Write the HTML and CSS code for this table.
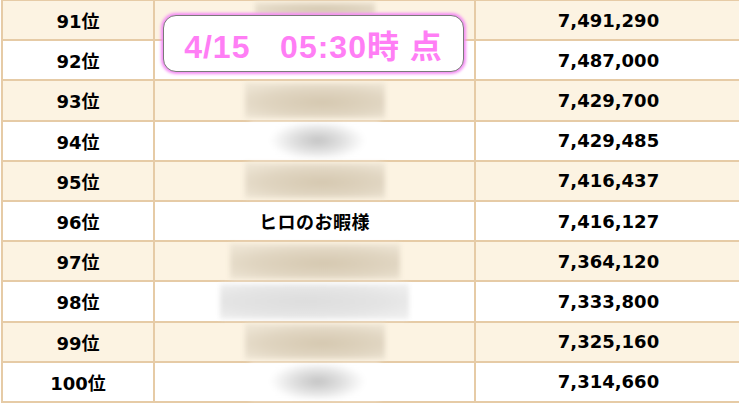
FILE: index.html
```html
<!DOCTYPE html>
<html lang="ja">
<head>
<meta charset="utf-8">
<title>ランキング</title>
<link rel="stylesheet" href="styles.css">
</head>
<body>
<div class="wrap">
  <table class="rank">
    <tbody>
      <tr class="odd"><td class="pos">91位</td><td class="name"><span class="blur beige w1 top"></span></td><td class="num">7,491,290</td></tr>
      <tr><td class="pos">92位</td><td class="name"></td><td class="num">7,487,000</td></tr>
      <tr class="odd"><td class="pos">93位</td><td class="name"><span class="blur beige w2"></span></td><td class="num">7,429,700</td></tr>
      <tr><td class="pos">94位</td><td class="name"><span class="blur spot w3"></span></td><td class="num">7,429,485</td></tr>
      <tr class="odd"><td class="pos">95位</td><td class="name"><span class="blur beige w2"></span></td><td class="num">7,416,437</td></tr>
      <tr><td class="pos">96位</td><td class="name"><span class="nick">ヒロのお暇様</span></td><td class="num">7,416,127</td></tr>
      <tr class="odd"><td class="pos">97位</td><td class="name"><span class="blur beige w4"></span></td><td class="num">7,364,120</td></tr>
      <tr><td class="pos">98位</td><td class="name"><span class="blur gray w5"></span></td><td class="num">7,333,800</td></tr>
      <tr class="odd"><td class="pos">99位</td><td class="name"><span class="blur beige w6"></span></td><td class="num">7,325,160</td></tr>
      <tr><td class="pos">100位</td><td class="name"><span class="blur spot w3"></span></td><td class="num">7,314,660</td></tr>
    </tbody>
  </table>
  <div class="badge">4/15&nbsp;&nbsp;&nbsp;05:30時 点</div>
</div>
</body>
</html>
```
FILE: styles.css
```css
html, body {
  margin: 0;
  padding: 0;
  background: #ffffff;
  overflow: hidden;
}
.wrap {
  position: relative;
  width: 739px;
  height: 403px;
  overflow: hidden;
}
.rank {
  margin: -1px 0 0 1px;
  width: 742px;
  border-collapse: collapse;
  table-layout: fixed;
  font-family: "DejaVu Sans", "Noto Sans CJK JP", sans-serif;
  font-weight: bold;
  font-size: 18px;
  color: #000;
  border-left: 2px solid #e6cba6;
}
.rank td {
  height: 40.2px;
  padding: 0;
  border: 2px solid #e6cba6;
  text-align: center;
  vertical-align: middle;
  box-sizing: border-box;
  background: #ffffff;
}
.rank td.pos { width: 152px; }
.rank td.name { width: 321px; }
.rank tr.odd td { background: #fcf3e2; }
.nick {
  font-family: "Noto Sans CJK JP", sans-serif;
  font-weight: bold;
  font-size: 18px;
  letter-spacing: 0.5px;
}
.blur {
  display: inline-block;
  height: 35px;
  vertical-align: middle;
  filter: blur(2.5px);
}
.blur.top { height: 14px; margin-top: -26px; }
.beige { background: radial-gradient(ellipse 70% 60% at 55% 55%, #d5c8b0, #e0d5c1 60%, #ece3d2); }
.gray { background: radial-gradient(ellipse 70% 60% at 45% 50%, #dddddd, #e4e4e4 60%, #eeeeee); }
.spot { background: radial-gradient(ellipse 48px 20px at 52% 50%, #c4c4c4, #e2e2e2 55%, #f6f6f6 85%, #ffffff); }
.w1 { width: 120px; }
.w2 { width: 140px; }
.w3 { width: 130px; }
.w4 { width: 170px; }
.w5 { width: 189px; }
.w6 { width: 140px; }
.badge {
  position: absolute;
  left: 163px;
  top: 15px;
  width: 301px;
  height: 57px;
  box-sizing: border-box;
  border: 1px solid #7a7a7a;
  border-radius: 13px;
  background: #ffffff;
  box-shadow: 0 0 3px 2px #f48cf4;
  font-family: "Liberation Sans", "Noto Sans CJK JP", sans-serif;
  font-weight: bold;
  font-size: 32px;
  color: #ff7ef5;
  display: flex;
  align-items: center;
  justify-content: center;
  white-space: nowrap;
  letter-spacing: 1px;
}
```
